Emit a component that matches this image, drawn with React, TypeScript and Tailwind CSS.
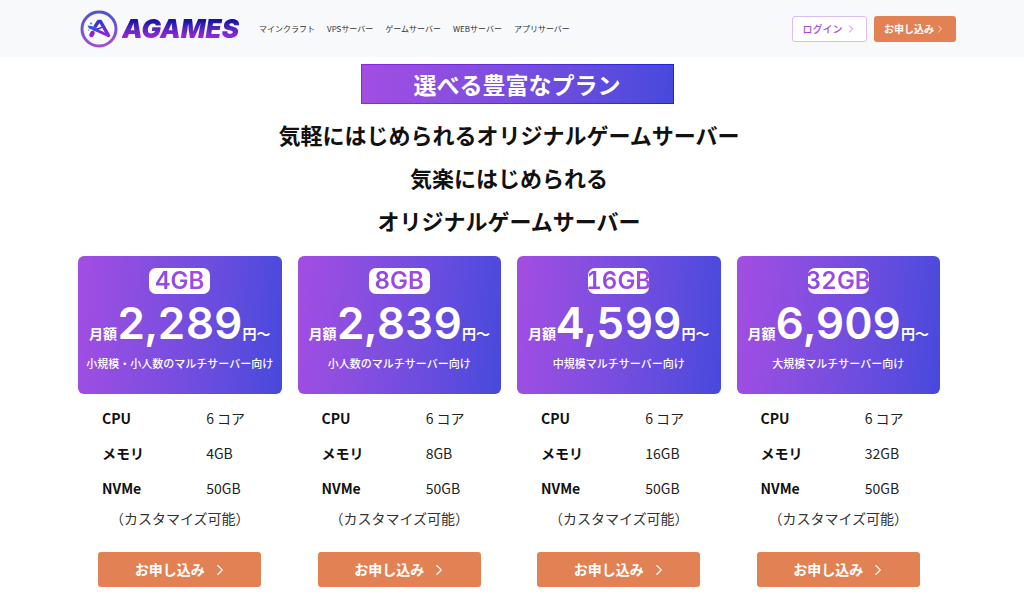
import { ChevronRight } from "lucide-react";

interface Plan {
  memory: string;
  price: string;
  target: string;
}

const NAV_ITEMS = [
  "マインクラフト",
  "VPSサーバー",
  "ゲームサーバー",
  "WEBサーバー",
  "アプリサーバー",
];

const PLANS: Plan[] = [
  { memory: "4GB", price: "2,289", target: "小規模・小人数のマルチサーバー向け" },
  { memory: "8GB", price: "2,839", target: "小人数のマルチサーバー向け" },
  { memory: "16GB", price: "4,599", target: "中規模マルチサーバー向け" },
  { memory: "32GB", price: "6,909", target: "大規模マルチサーバー向け" },
];

function LogoMark() {
  return (
    <svg viewBox="0 0 38 38" className="size-[38px]" fill="none" aria-hidden>
      <defs>
        <linearGradient id="ring" x1="0" y1="0" x2="0" y2="38" gradientUnits="userSpaceOnUse">
          <stop stopColor="#4a55cf" />
          <stop offset="1" stopColor="#ab4bd6" />
        </linearGradient>
        <linearGradient id="mark" x1="0" y1="9" x2="0" y2="29" gradientUnits="userSpaceOnUse">
          <stop stopColor="#2437c8" />
          <stop offset="1" stopColor="#a81fe0" />
        </linearGradient>
      </defs>
      <circle cx="19" cy="19" r="17" stroke="url(#ring)" strokeWidth="3" />
      <g stroke="url(#mark)" strokeLinecap="round" strokeLinejoin="round">
        <path d="M15.5 16L18.5 11.5L20.5 11.5L28.5 25.5" strokeWidth="3.5" />
        <path d="M12.5 23L11.5 25" strokeWidth="4.5" />
        <path d="M16 20L28 25.5" strokeWidth="3" />
        <path d="M14 20.5L21.5 17.5" strokeWidth="1.5" />
      </g>
      <g fill="#3157e0">
        <path d="M7.5 15.5L14 16.5L20 20L17 21.5L9 18.5Z" />
        <circle cx="11" cy="13.5" r="0.9" />
        <circle cx="8.5" cy="20" r="0.6" />
      </g>
    </svg>
  );
}

function SiteHeader() {
  return (
    <header className="bg-[#f8f9fb]">
      <div className="flex h-[57px] items-center pl-20 pr-[68px]">
        <a href="#top" className="flex items-center gap-1" aria-label="AGAMES">
          <LogoMark />
          <span className="bg-linear-to-b from-[#1812a8] from-25% to-[#a024dc] to-80% bg-clip-text pr-1 font-[Inter] text-[26px] leading-8 font-black text-transparent italic">
            AGAMES
          </span>
        </a>
        <nav className="ml-4 flex gap-3 text-[8px] whitespace-nowrap text-[#333]">
          {NAV_ITEMS.map((item) => (
            <a key={item} href="#plans" className="hover:underline">
              {item}
            </a>
          ))}
        </nav>
        <div className="ml-auto flex gap-[7px] text-[10px] font-medium whitespace-nowrap">
          <a
            href="#login"
            className="flex h-[26px] w-[75px] items-center justify-center gap-[2px] rounded-[3px] border border-[#d9bdf5] bg-white text-[#a64de0]"
          >
            ログイン
            <ChevronRight className="size-3" strokeWidth={1.5} aria-hidden />
          </a>
          <a
            href="#order"
            className="flex h-[26px] w-[82px] items-center justify-center rounded-[3px] bg-[#e28254] font-bold text-white"
          >
            お申し込み
            <ChevronRight className="size-3" strokeWidth={1.5} aria-hidden />
          </a>
        </div>
      </div>
    </header>
  );
}

function PlanCard({ plan }: { plan: Plan }) {
  return (
    <article className="flex flex-col items-center">
      <div className="flex h-[138px] w-full flex-col items-center rounded-[6px] bg-linear-95 from-[#a34de2] to-[#4649dc] pt-3 text-white">
        {/* Longer sizes run past the fixed-width badge */}
        <h3 className="flex h-[26px] w-[61px] items-center justify-center rounded-[7px] bg-white font-[Inter] text-[24px] leading-6 font-semibold tabular-nums">
          <span className="bg-linear-to-r from-[#8f47e4] to-[#a34de2] bg-clip-text text-transparent">
            {plan.memory}
          </span>
        </h3>
        <p className="flex items-baseline pt-[3px] text-[14px] leading-[52px] font-bold whitespace-nowrap">
          月額
          <span className="font-[Inter] text-[44px] font-semibold tabular-nums">{plan.price}</span>
          円〜
        </p>
        <p className="-mt-1 text-[11px] leading-4 font-medium whitespace-nowrap">{plan.target}</p>
      </div>
      <table className="mt-[7px] w-full text-left text-[14px] text-[#222]">
        <tbody>
          {[
            ["CPU", "6 コア"],
            ["メモリ", plan.memory],
            ["NVMe", "50GB"],
          ].map(([label, value]) => (
            <tr key={label} className="h-[35px]">
              <th scope="row" className="w-[63%] pl-6 font-bold text-[#111]">
                {label}
              </th>
              <td>{value}</td>
            </tr>
          ))}
        </tbody>
      </table>
      <p className="text-[14px] leading-6 text-[#333]">（カスタマイズ可能）</p>
      <a
        href="#order"
        className="mt-[22px] flex h-[35px] w-4/5 items-center justify-center gap-[6px] rounded-[3px] bg-[#e28254] pl-1 text-[14px] font-bold text-white"
      >
        お申し込み
        <ChevronRight className="size-[18px]" strokeWidth={1.5} aria-hidden />
      </a>
    </article>
  );
}

export default function App() {
  return (
    <div
      id="top"
      className="min-h-screen bg-white font-['Noto_Sans_CJK_JP',sans-serif] text-[#111]"
    >
      <SiteHeader />
      <main id="plans" className="pt-[7px] pr-[6px] pb-3">
        <div className="pl-4">
          <div className="mx-auto w-[313px] bg-linear-to-r from-[#9126d6] to-[#2420d8] p-px">
            <h1 className="bg-linear-95 from-[#a34de2] to-[#4649dc] text-center text-[23px] leading-[38px] font-bold text-white">
              選べる豊富なプラン
            </h1>
          </div>
        </div>
        <h2 className="mt-[9px] text-center text-[22px] leading-[43px] font-bold">
          気軽にはじめられるオリジナルゲームサーバー
          <br />
          気楽にはじめられる
          <br />
          オリジナルゲームサーバー
        </h2>
        <section className="mx-auto mt-[14px] grid max-w-[862px] grid-cols-4 gap-4">
          {PLANS.map((plan) => (
            <PlanCard key={plan.memory} plan={plan} />
          ))}
        </section>
      </main>
    </div>
  );
}
